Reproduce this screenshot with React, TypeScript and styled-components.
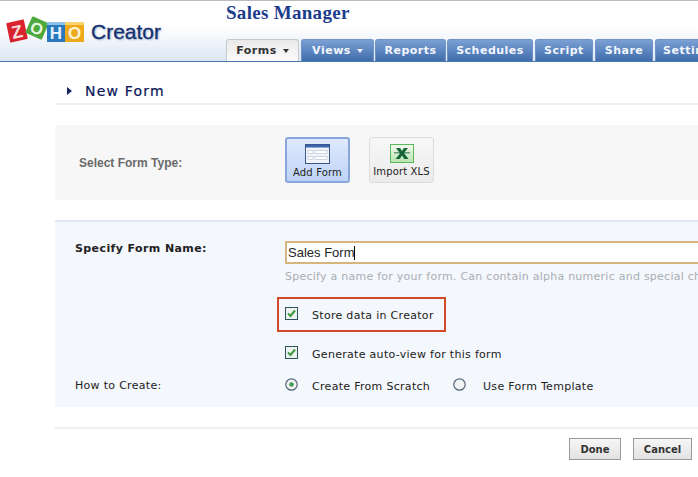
import styled, { createGlobalStyle } from 'styled-components';

const GlobalStyle = createGlobalStyle`
  html, body {
    margin: 0;
    padding: 0;
    background: #fff;
  }
`;

function ZohoLogo() {
  return (
    <LogoSvg width="80" height="28" viewBox="0 0 80 28">
      <g transform="rotate(-12 11 15)">
        <rect x="2" y="5" width="18" height="20" rx="1" fill="#d8232f" />
        <text x="11" y="22" textAnchor="middle" fontSize="18" fontWeight="700" fontFamily="Liberation Sans, sans-serif" fill="#f8dcdc">Z</text>
      </g>
      <g transform="rotate(24 31 12)">
        <rect x="22" y="3" width="18" height="18" rx="1" fill="#4ea83c" />
        <text x="31" y="18" textAnchor="middle" fontSize="16" fontWeight="700" fontFamily="Liberation Sans, sans-serif" fill="#e8f6e4">O</text>
      </g>
      <rect x="41" y="6" width="18" height="20" fill="#2a78bd" />
      <rect x="41" y="6" width="18" height="3" fill="#8cc0e8" />
      <text x="50" y="23" textAnchor="middle" fontSize="17" fontWeight="700" fontFamily="Liberation Sans, sans-serif" fill="#e6f2fb">H</text>
      <rect x="59" y="6" width="19" height="20" fill="#eeaa1c" />
      <rect x="59" y="6" width="19" height="3" fill="#f8d46e" />
      <text x="68.500" y="23" textAnchor="middle" fontSize="17" fontWeight="700" fontFamily="Liberation Sans, sans-serif" fill="#fdf3d8">O</text>
    </LogoSvg>
  );
}

function AddFormIcon() {
  return (
    <svg width="25" height="20" viewBox="0 0 25 20">
      <rect x="0.5" y="0.5" width="24" height="19" fill="#f0f3fa" stroke="#3a5590" />
      <rect x="1" y="1" width="23" height="2.500" fill="#3a63b0" />
      <rect x="3" y="6.500" width="5" height="3" fill="#fff" stroke="#b4bfd2" strokeWidth="0.6" />
      <rect x="10" y="6.500" width="12" height="3" fill="#fff" stroke="#b4bfd2" strokeWidth="0.6" />
      <rect x="3" y="12.500" width="5" height="3" fill="#fff" stroke="#b4bfd2" strokeWidth="0.6" />
      <rect x="10" y="12.500" width="12" height="3" fill="#fff" stroke="#b4bfd2" strokeWidth="0.6" />
    </svg>
  );
}

function ExcelIcon() {
  return (
    <svg width="24" height="19" viewBox="0 0 24 19">
      <defs>
        <linearGradient id="xls" x1="0" y1="0" x2="0" y2="1">
          <stop offset="0" stopColor="#f4fbf2" />
          <stop offset="1" stopColor="#b9e2b0" />
        </linearGradient>
      </defs>
      <rect x="0.5" y="0.5" width="23" height="18" fill="url(#xls)" stroke="#5cb85c" />
      <path d="M6 4h4l2 3 2-3h4l-4 5 4.500 6h-4.200L12 11.500 9.700 15H5.500L10 9.500z" fill="#17663a" />
      <rect x="4" y="8" width="16" height="1.500" fill="#17663a" opacity="0.6" />
    </svg>
  );
}

function CheckIcon() {
  return (
    <svg width="13" height="13" viewBox="0 0 13 13">
      <rect x="0.5" y="0.5" width="12" height="12" fill="#eef3f0" stroke="#2d5560" />
      <path d="M3 6.500l2.500 2.500L10 3.500" fill="none" stroke="#3c9a3c" strokeWidth="2" />
    </svg>
  );
}

function RadioIcon({ on }: { on?: boolean }) {
  return (
    <svg width="13" height="13" viewBox="0 0 13 13">
      <circle cx="6.500" cy="6.500" r="5.700" fill="#f2f4f6" stroke="#56687e" strokeWidth="1.200" />
      {on && <circle cx="6.500" cy="6.500" r="2.300" fill="#3f9a55" />}
    </svg>
  );
}

const tabs = [
  { name: 'Forms', w: 73, caret: true, active: true, gap: 2 },
  { name: 'Views', w: 73, caret: true, gap: 1 },
  { name: 'Reports', w: 71, gap: 1 },
  { name: 'Schedules', w: 86, gap: 2 },
  { name: 'Script', w: 58, gap: 2 },
  { name: 'Share', w: 58, gap: 2 },
  { name: 'Settings', w: 72, gap: 0 },
];

export default function App() {
  return (
    <Page>
      <GlobalStyle />
      <Header>
        <Brand>
          <ZohoLogo />
          <BrandName>Creator</BrandName>
        </Brand>
        <HeaderRight>
          <AppTitle>Sales Manager</AppTitle>
          <TabBar>
            {tabs.map((t) => (
              <Tab key={t.name} $active={t.active} $w={t.w} $gap={t.gap}>
                {t.name}
                {t.caret && <Caret $active={t.active} />}
              </Tab>
            ))}
          </TabBar>
        </HeaderRight>
      </Header>

      <Content>
        <Heading>
          <HeadingArrow />
          <HeadingText>New Form</HeadingText>
        </Heading>

        <TypePanel>
          <TypeLabel>Select Form Type:</TypeLabel>
          <TypeButtons>
            <TypeButton $selected>
              <AddFormIcon />
              <span>Add Form</span>
            </TypeButton>
            <TypeButton>
              <ExcelIcon />
              <span>Import XLS</span>
            </TypeButton>
          </TypeButtons>
        </TypePanel>

        <FormPanel>
          <FieldRow>
            <FieldLabel $bold>Specify Form Name:</FieldLabel>
            <FieldBody>
              <NameInput>
                Sales Form<Cursor />
              </NameInput>
              <Hint>Specify a name for your form. Can contain alpha numeric and special characters</Hint>
              <Highlight>
                <CheckIcon />
                <OptionText>Store data in Creator</OptionText>
              </Highlight>
              <Option>
                <CheckIcon />
                <OptionText>Generate auto-view for this form</OptionText>
              </Option>
            </FieldBody>
          </FieldRow>
          <MethodRow>
            <FieldLabel>How to Create:</FieldLabel>
            <RadioRow>
              <RadioItem $gap={14}>
                <RadioIcon on />
                <OptionText>Create From Scratch</OptionText>
              </RadioItem>
              <RadioItem $gap={17}>
                <RadioIcon />
                <OptionText>Use Form Template</OptionText>
              </RadioItem>
            </RadioRow>
          </MethodRow>
        </FormPanel>

        <Footer>
          <ActionButton $w={52}>Done</ActionButton>
          <ActionButton $w={59}>Cancel</ActionButton>
        </Footer>
      </Content>
    </Page>
  );
}

const Page = styled.div`
  width: 698px;
  height: 477px;
  overflow: hidden;
  font-family: 'DejaVu Sans', sans-serif;
  font-size: 11px;
  color: #222;
  background: #fff;
`;

const Header = styled.header`
  display: flex;
  height: 60px;
  border-top: 1px solid #bbb;
  border-bottom: 1px solid #4a78ae;
  background: linear-gradient(#fff 0, #fff 26px, #dbe6f4 60px);
`;

const Brand = styled.div`
  display: flex;
  align-items: flex-start;
  width: 226px;
  padding: 15px 0 0 6px;
  box-sizing: border-box;
`;

const LogoSvg = styled.svg`
  flex: none;
`;

const BrandName = styled.div`
  margin: 3px 0 0 5px;
  font-family: 'Liberation Sans', sans-serif;
  font-size: 21px;
  line-height: 26px;
  color: #14306e;
  -webkit-text-stroke: 0.3px #14306e;
  text-shadow: 1px 1px 2px #9fb0cc;
`;

const HeaderRight = styled.div`
  flex: 1;
  min-width: 0;
  display: flex;
  flex-direction: column;
  justify-content: space-between;
`;

const AppTitle = styled.div`
  margin-top: 2px;
  font-family: 'Liberation Serif', serif;
  font-weight: 700;
  font-size: 19px;
  letter-spacing: 0.3px;
  line-height: 20px;
  color: #1d3c8c;
`;

const TabBar = styled.nav`
  display: flex;
  height: 22px;
  overflow: hidden;
`;

const Tab = styled.div<{ $active?: boolean; $w: number; $gap: number }>`
  flex: none;
  display: flex;
  align-items: center;
  justify-content: center;
  gap: 6px;
  box-sizing: border-box;
  width: ${(p) => p.$w}px;
  margin-right: ${(p) => p.$gap}px;
  padding-bottom: 1px;
  border-radius: 3px 3px 0 0;
  font-weight: 700;
  font-size: 11px;
  letter-spacing: 0.5px;
  color: ${(p) => (p.$active ? '#333' : '#f2f6fc')};
  background: ${(p) =>
    p.$active ? 'linear-gradient(#e9e9e9, #fbfbfb)' : 'linear-gradient(#7ba0d4, #3f6dac)'};
  border: 1px solid ${(p) => (p.$active ? '#c4c8cf' : '#6d92c6')};
  border-bottom: none;
`;

const Caret = styled.i<{ $active?: boolean }>`
  width: 0;
  height: 0;
  margin-top: 2px;
  border-left: 3.5px solid transparent;
  border-right: 3.5px solid transparent;
  border-top: 4px solid ${(p) => (p.$active ? '#333' : '#f2f6fc')};
`;

const Content = styled.main`
  padding-left: 55px;
`;

const Heading = styled.div`
  display: flex;
  align-items: center;
  height: 43px;
  padding: 16px 0 0 12px;
  box-sizing: border-box;
  border-bottom: 2px solid #f1f1f1;
`;

const HeadingArrow = styled.i`
  width: 0;
  height: 0;
  margin-right: 13px;
  border-top: 4px solid transparent;
  border-bottom: 4px solid transparent;
  border-left: 5px solid #14245e;
`;

const HeadingText = styled.h1`
  margin: 0;
  font-size: 14px;
  font-weight: 400;
  letter-spacing: 1.2px;
  color: #0b1558;
  -webkit-text-stroke: 0.2px #0b1558;
`;

const TypePanel = styled.section`
  display: flex;
  align-items: flex-start;
  height: 75px;
  margin-top: 20px;
  padding: 12px 0 0 24px;
  box-sizing: border-box;
  background: #f7f7f7;
`;

const TypeLabel = styled.div`
  width: 206px;
  margin-top: 19px;
  font-family: 'Liberation Sans', sans-serif;
  font-size: 12px;
  font-weight: 700;
  color: #6a6a6a;
`;

const TypeButtons = styled.div`
  display: flex;
  gap: 19px;
`;

const TypeButton = styled.div<{ $selected?: boolean }>`
  display: flex;
  flex-direction: column;
  align-items: center;
  gap: 3px;
  box-sizing: border-box;
  width: 65px;
  height: 46px;
  padding-top: ${(p) => (p.$selected ? 5 : 6)}px;
  border-radius: 3px;
  font-size: 10px;
  letter-spacing: 0.15px;
  color: #222;
  white-space: nowrap;
  background: ${(p) => (p.$selected ? 'linear-gradient(#dfeafc, #bed3f6)' : 'linear-gradient(#f7f7f7, #ebebeb)')};
  border: ${(p) => (p.$selected ? '2px solid #89a6dc' : '1px solid #dcdcdc')};
`;

const FormPanel = styled.section`
  box-sizing: border-box;
  height: 187px;
  margin-top: 20px;
  padding: 21px 0 0 20px;
  border-top: 2px solid #dce8f5;
  background: #f4f7fc;
  letter-spacing: 0.3px;
`;

const FieldRow = styled.div`
  display: flex;
`;

const MethodRow = styled(FieldRow)`
  margin-top: 17px;
`;

const FieldLabel = styled.div<{ $bold?: boolean }>`
  flex: none;
  width: 210px;
  margin-top: ${(p) => (p.$bold ? -1 : 1)}px;
  font-weight: ${(p) => (p.$bold ? 700 : 400)};
  letter-spacing: ${(p) => (p.$bold ? 0.4 : 0.3)}px;
  color: #222;
  line-height: 13px;
`;

const FieldBody = styled.div`
  flex: 1;
  min-width: 0;
`;

const NameInput = styled.div`
  display: flex;
  align-items: center;
  box-sizing: border-box;
  width: 500px;
  height: 23px;
  margin-top: -2px;
  padding-left: 1px;
  background: #fff;
  border: 2px solid #d6b57e;
  font-family: 'Liberation Sans', sans-serif;
  font-size: 13px;
  letter-spacing: 0;
  color: #222;
`;

const Cursor = styled.i`
  width: 1px;
  height: 14px;
  background: #000;
`;

const Hint = styled.div`
  margin-top: 6px;
  white-space: nowrap;
  color: #aaaeb4;
  line-height: 13px;
  letter-spacing: 0.25px;
`;

const Option = styled.div`
  display: flex;
  align-items: flex-start;
  gap: 14px;
  height: 15px;
  margin-top: 14px;
`;

const Highlight = styled.div`
  display: flex;
  align-items: flex-start;
  gap: 14px;
  box-sizing: border-box;
  width: 169px;
  height: 35px;
  margin: 14px 0 0 -8px;
  padding: 8px 0 0 6px;
  border: 2px solid #d34a2b;
`;

const OptionText = styled.span`
  padding-top: 2px;
  line-height: 13px;
  white-space: nowrap;
  color: #222;
`;

const RadioRow = styled.div`
  display: flex;
`;

const RadioItem = styled.div<{ $gap: number }>`
  display: flex;
  align-items: flex-start;
  gap: ${(p) => p.$gap}px;
  width: 168px;
`;

const Footer = styled.footer`
  display: flex;
  justify-content: flex-end;
  gap: 12px;
  height: 47px;
  margin-top: 20px;
  padding: 9px 6px 0 0;
  box-sizing: border-box;
  border-top: 2px solid #eee;
`;

const ActionButton = styled.div<{ $w: number }>`
  display: flex;
  align-items: center;
  justify-content: center;
  box-sizing: border-box;
  width: ${(p) => p.$w}px;
  height: 22px;
  font-weight: 700;
  font-size: 10px;
  color: #333;
  background: linear-gradient(#f6f6f6, #e2e2e2);
  border: 1px solid #9a9a9a;
`;
